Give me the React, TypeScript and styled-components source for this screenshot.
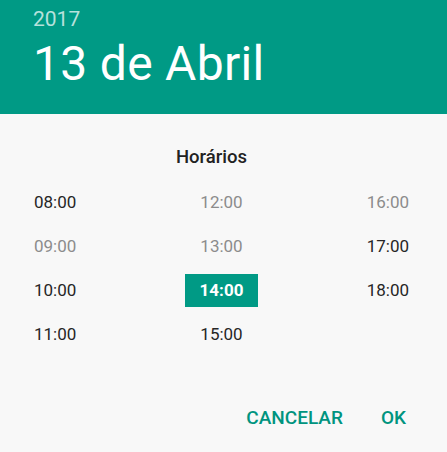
import styled, {createGlobalStyle} from "styled-components";

const GlobalStyle = createGlobalStyle`
    html, body {
        margin: 0;
        padding: 0;
        background: #f8f8f8;
        font-family: Roboto, "Noto Sans", sans-serif;
    }
`;

const Dialog = styled.div`
    width: 447px;
    height: 452px;
    background: #f8f8f8;
    display: flex;
    flex-direction: column;
`;

const Header = styled.header`
    height: 114px;
    box-sizing: border-box;
    background: #009a85;
    padding: 4px 0 0 33px;
    color: #fff;
`;

const Year = styled.div`
    font-size: 21px;
    line-height: 30px;
    color: rgba(255, 255, 255, 0.72);
`;

const DateTitle = styled.div`
    font-size: 48px;
    line-height: 60px;
    font-weight: 400;
    letter-spacing: 0.3px;
`;

const Body = styled.main`
    flex: 1;
    display: flex;
    flex-direction: column;
`;

const SectionTitle = styled.h2`
    margin: 31px 0 0 0;
    padding-right: 24px;
    text-align: center;
    font-size: 18.5px;
    line-height: 24px;
    font-weight: 500;
    color: #222;
`;

const Grid = styled.div`
    display: flex;
    justify-content: space-between;
    padding: 17px 38px 0 34px;
`;

const Column = styled.div`
    display: flex;
    flex-direction: column;
    align-items: center;
    gap: 11px;
`;

const Slot = styled.div<{ $disabled?: boolean; $selected?: boolean }>`
    height: 33px;
    line-height: 33px;
    padding: 0 ${(p) => (p.$selected ? "15px" : "0")};
    font-size: 17px;
    font-weight: ${(p) => (p.$selected ? 700 : 400)};
    color: ${(p) => (p.$selected ? "#fff" : p.$disabled ? "#8c8c8c" : "#262626")};
    background: ${(p) => (p.$selected ? "#009a85" : "transparent")};
`;

const Actions = styled.div`
    margin-top: auto;
    display: flex;
    justify-content: flex-end;
    gap: 38px;
    padding: 0 41px 22px 0;
`;

const ActionButton = styled.button`
    border: none;
    background: none;
    padding: 0;
    font-family: Roboto, sans-serif;
    font-size: 19px;
    font-weight: 500;
    line-height: 24px;
    color: #00947f;
    cursor: pointer;
`;

type SlotData = { time: string; disabled?: boolean; selected?: boolean };

const columns: SlotData[][] = [
    [{time: "08:00"}, {time: "09:00", disabled: true}, {time: "10:00"}, {time: "11:00"}],
    [{time: "12:00", disabled: true}, {time: "13:00", disabled: true}, {time: "14:00", selected: true}, {time: "15:00"}],
    [{time: "16:00", disabled: true}, {time: "17:00"}, {time: "18:00"}],
];

export default function App() {
    return (
        <Dialog>
            <GlobalStyle/>
            <Header>
                <Year>2017</Year>
                <DateTitle>13 de Abril</DateTitle>
            </Header>
            <Body>
                <SectionTitle>Horários</SectionTitle>
                <Grid>
                    {columns.map((col, i) => (
                        <Column key={i}>
                            {col.map((s) => (
                                <Slot key={s.time} $disabled={s.disabled} $selected={s.selected}>
                                    {s.time}
                                </Slot>
                            ))}
                        </Column>
                    ))}
                </Grid>
                <Actions>
                    <ActionButton>CANCELAR</ActionButton>
                    <ActionButton>OK</ActionButton>
                </Actions>
            </Body>
        </Dialog>
    );
}
